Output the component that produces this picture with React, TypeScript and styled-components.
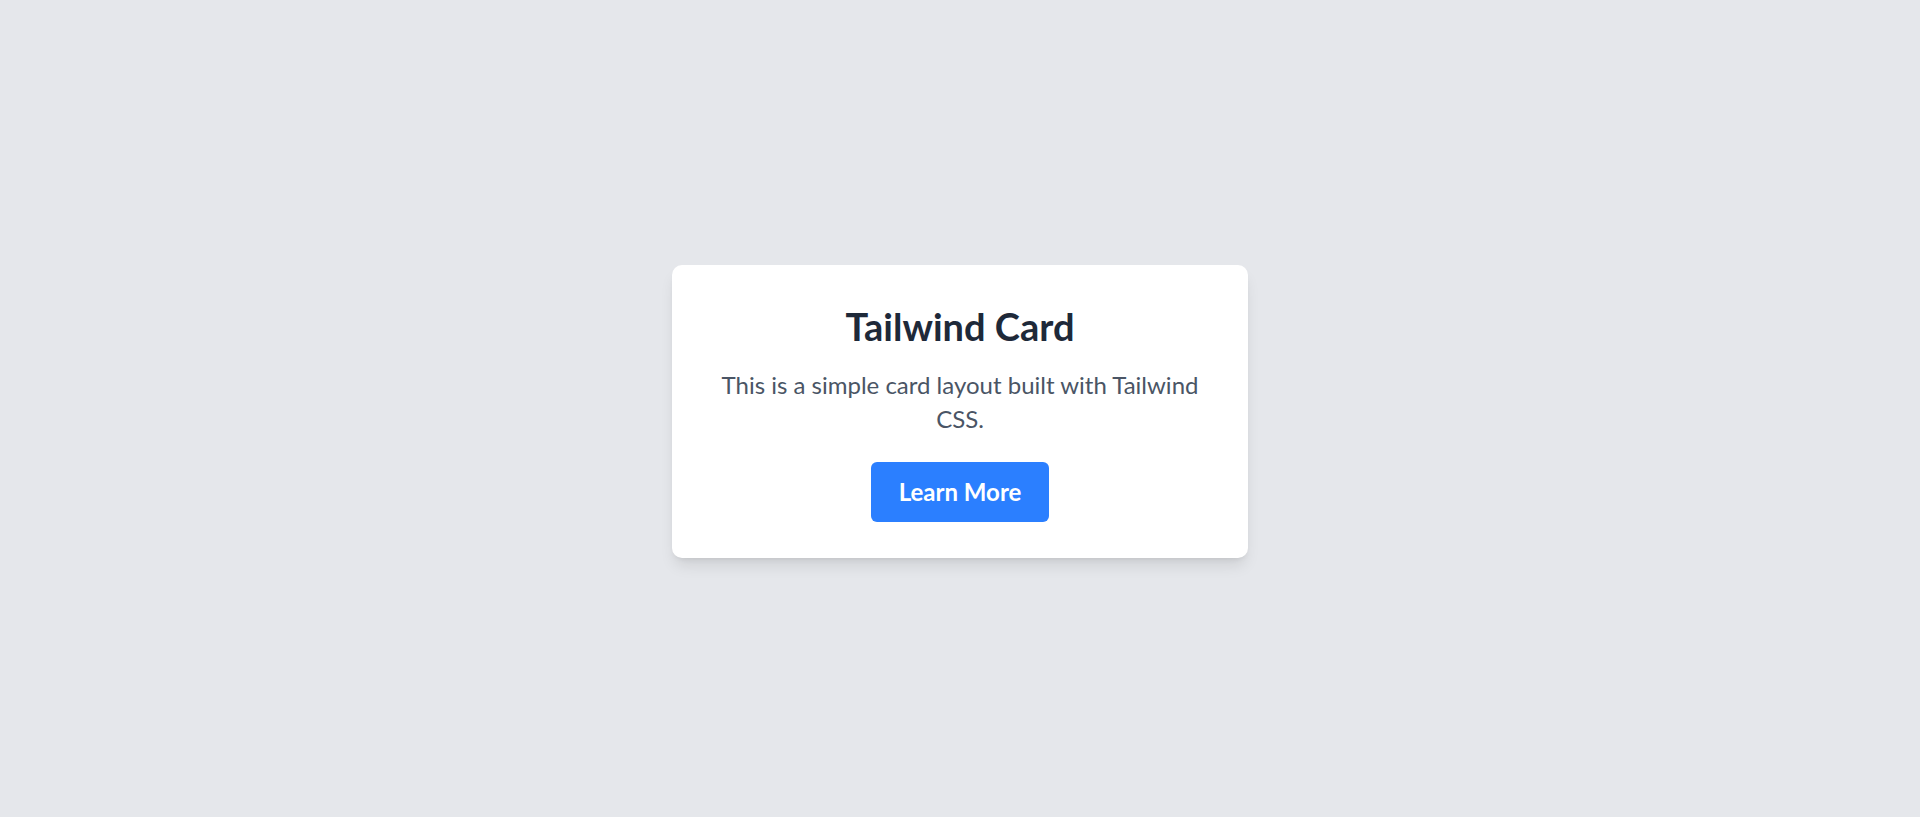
import styled, { createGlobalStyle } from 'styled-components';

const GlobalStyle = createGlobalStyle`
  html, body {
    margin: 0;
    padding: 0;
    height: 100%;
  }
  body {
    background: #e5e7eb;
    font-family: Lato, "Noto Sans", sans-serif;
  }
  #root {
    height: 100%;
  }
`;

const Page = styled.main`
  min-height: 100vh;
  box-sizing: border-box;
  padding-top: 5px;
  display: flex;
  align-items: center;
  justify-content: center;
`;

const Card = styled.section`
  width: 576px;
  box-sizing: border-box;
  padding: 37px 48px 36px;
  background: #ffffff;
  border-radius: 10px;
  box-shadow: 0 10px 15px -3px rgba(0, 0, 0, 0.1), 0 4px 6px -4px rgba(0, 0, 0, 0.1);
  display: flex;
  flex-direction: column;
  align-items: center;
  text-align: center;
`;

const Title = styled.h2`
  margin: 0 0 18px;
  font-size: 38px;
  line-height: 48px;
  font-weight: 700;
  color: #1e2939;
`;

const Text = styled.p`
  margin: 0 0 26px;
  font-size: 24px;
  line-height: 34px;
  color: #4a5565;
`;

const Button = styled.button`
  height: 60px;
  padding: 0 28px;
  border: 0;
  border-radius: 6px;
  background: #2b7fff;
  color: #ffffff;
  font-family: inherit;
  font-size: 24px;
  font-weight: 700;
  cursor: pointer;
  display: flex;
  align-items: center;
`;

export default function App() {
  return (
    <>
      <GlobalStyle />
      <Page>
        <Card>
          <Title>Tailwind Card</Title>
          <Text>This is a simple card layout built with Tailwind CSS.</Text>
          <Button>Learn More</Button>
        </Card>
      </Page>
    </>
  );
}
